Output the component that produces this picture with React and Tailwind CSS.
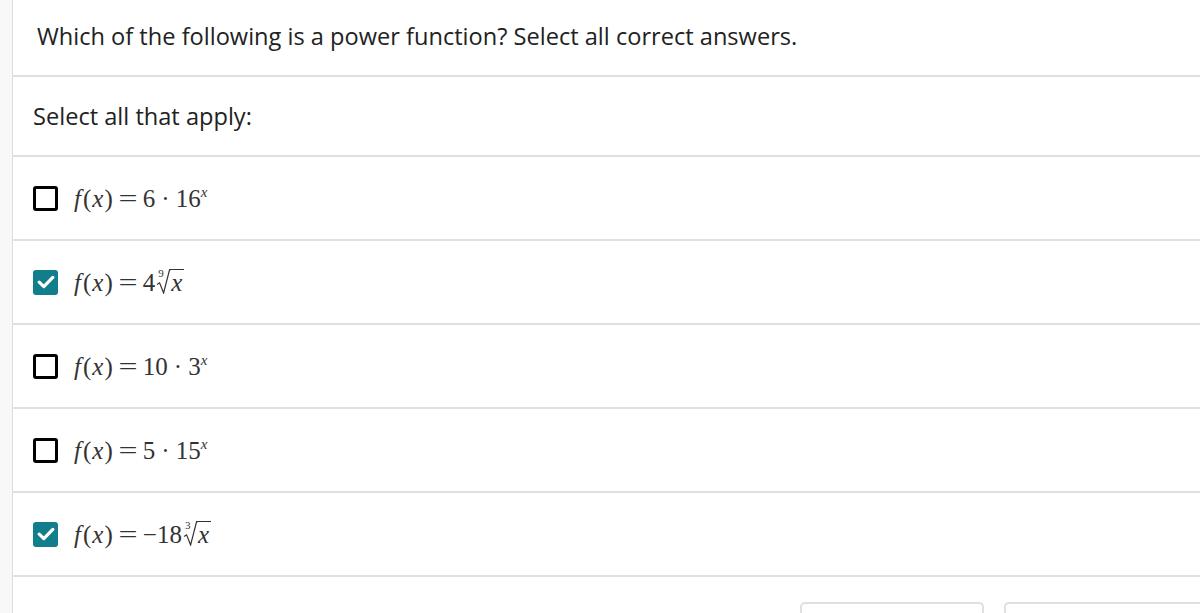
import React from "react";

function Box({ checked }) {
  if (checked) {
    return (
      <div className="w-[25px] h-[25px] rounded-[3px] bg-[#127d8b] flex items-center justify-center shrink-0">
        <svg width="18" height="14" viewBox="0 0 18 14">
          <path d="M2.2 7.2 L6.8 11.6 L15.8 2.4" fill="none" stroke="white" strokeWidth="3.2" strokeLinecap="round" strokeLinejoin="round" />
        </svg>
      </div>
    );
  }
  return <div className="w-[25px] h-[25px] rounded-[3px] border-[3px] border-black shrink-0" />;
}

const I = ({ children, className = "" }) => <span className={"italic " + className}>{children}</span>;

function Root({ index, children }) {
  return (
    <span className="relative inline-block pl-[14px] ml-[1px]">
      <svg width="15" height="25" viewBox="0 0 15 25" className="absolute left-0 top-0">
        <path d="M1 15.5 L3.6 13.8 L7.6 24 L13.6 0.6 L15 0.6" fill="none" stroke="#333" strokeWidth="1.2" strokeLinejoin="miter" />
      </svg>
      <span className="absolute left-[2px] top-[-1px] text-[11px] leading-none">{index}</span>
      <span className="inline-block border-t-[1.2px] border-[#333] leading-[26px] italic pl-[1px] pr-[2px]">
        {children}
      </span>
    </span>
  );
}

function Fx() {
  return (
    <>
      <I className="mr-[2px]">f</I>(<I className="mx-[1px]">x</I>)
      <span className="inline-block scale-x-[1.35] ml-[8px] mr-[8px]">=</span>
    </>
  );
}

const Sup = () => <sup className="italic text-[15px] top-[-0.62em]">x</sup>;
const Dot = () => <span className="mx-[6px]">·</span>;

const rows = [
  { checked: false, expr: (<><Fx />6<Dot />16<Sup /></>) },
  { checked: true, expr: (<><Fx />4<Root index="9">x</Root></>) },
  { checked: false, expr: (<><Fx />10<Dot />3<Sup /></>) },
  { checked: false, expr: (<><Fx />5<Dot />15<Sup /></>) },
  { checked: true, expr: (<><Fx />−18<Root index="3">x</Root></>) },
];

export default function App() {
  return (
    <div className="w-[1200px] h-[613px] overflow-hidden bg-white flex">
      <div className="w-[13px] bg-[#f8f8f8] border-r-[1px] border-[#dddddd] shrink-0" />
      <div className="flex-1 flex flex-col" style={{ fontFamily: '"Open Sans", sans-serif' }}>
        <div className="h-[77px] flex items-center pl-[24px] pb-[1px] text-[23.6px] text-[#222] border-b-[2px] border-[#e0e0e0]">
          Which of the following is a power function? Select all correct answers.
        </div>
        <div className="h-[80px] flex items-center pl-[20px] pt-[2px] text-[23.6px] text-[#222] border-b-[2px] border-[#e0e0e0]">
          Select all that apply:
        </div>
        {rows.map((r, i) => (
          <div key={i} className="h-[84px] flex items-center pl-[20px] border-b-[2px] border-[#e0e0e0]">
            <Box checked={r.checked} />
            <div className="ml-[16px] text-[25px] text-[#333] whitespace-nowrap leading-none" style={{ fontFamily: '"Liberation Serif", serif' }}>
              {r.expr}
            </div>
          </div>
        ))}
        <div className="flex-1 flex items-end justify-end gap-[20px] pl-[787px]">
          <div className="w-[184px] h-[11px] border-[2px] border-b-0 border-[#e0e0e0] rounded-t-[5px]" />
          <div className="flex-1 h-[11px] border-[2px] border-b-0 border-r-0 border-[#e0e0e0] rounded-tl-[5px]" />
        </div>
      </div>
    </div>
  );
}
